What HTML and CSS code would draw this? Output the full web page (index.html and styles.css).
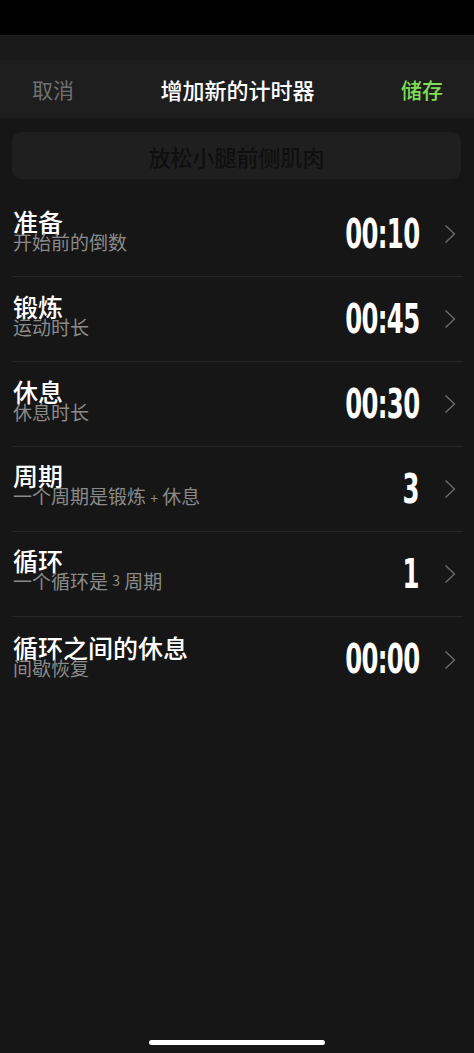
FILE: index.html
```html
<!DOCTYPE html>
<html lang="zh">
<head>
<meta charset="utf-8">
<title>增加新的计时器</title>
<link rel="stylesheet" href="styles.css">
</head>
<body>
<div class="screen">
  <div class="status"></div>
  <div class="sheet-gap"></div>
  <header class="nav">
    <span class="nav-cancel">取消</span>
    <span class="nav-title">增加新的计时器</span>
    <span class="nav-save">储存</span>
  </header>
  <div class="name-wrap">
    <div class="name-box">放松小腿前侧肌肉</div>
  </div>
  <ul class="rows">
    <li class="row">
      <div class="labels"><div class="title">准备</div><div class="sub">开始前的倒数</div></div>
      <div class="value">00:10</div>
      <svg class="chev" viewBox="0 0 12 20" width="12" height="20"><path d="M1.5 1.5 L10.5 10 L1.5 18.5" fill="none" stroke="#6f6f6f" stroke-width="1.3"/></svg>
    </li>
    <li class="row">
      <div class="labels"><div class="title">锻炼</div><div class="sub">运动时长</div></div>
      <div class="value">00:45</div>
      <svg class="chev" viewBox="0 0 12 20" width="12" height="20"><path d="M1.5 1.5 L10.5 10 L1.5 18.5" fill="none" stroke="#6f6f6f" stroke-width="1.3"/></svg>
    </li>
    <li class="row">
      <div class="labels"><div class="title">休息</div><div class="sub">休息时长</div></div>
      <div class="value">00:30</div>
      <svg class="chev" viewBox="0 0 12 20" width="12" height="20"><path d="M1.5 1.5 L10.5 10 L1.5 18.5" fill="none" stroke="#6f6f6f" stroke-width="1.3"/></svg>
    </li>
    <li class="row">
      <div class="labels"><div class="title">周期</div><div class="sub">一个周期是锻炼 <span class="plus">+</span> 休息</div></div>
      <div class="value">3</div>
      <svg class="chev" viewBox="0 0 12 20" width="12" height="20"><path d="M1.5 1.5 L10.5 10 L1.5 18.5" fill="none" stroke="#6f6f6f" stroke-width="1.3"/></svg>
    </li>
    <li class="row">
      <div class="labels"><div class="title">循环</div><div class="sub">一个循环是 <span class="num">3</span> 周期</div></div>
      <div class="value">1</div>
      <svg class="chev" viewBox="0 0 12 20" width="12" height="20"><path d="M1.5 1.5 L10.5 10 L1.5 18.5" fill="none" stroke="#6f6f6f" stroke-width="1.3"/></svg>
    </li>
    <li class="row last">
      <div class="labels"><div class="title">循环之间的休息</div><div class="sub">间歇恢复</div></div>
      <div class="value">00:00</div>
      <svg class="chev" viewBox="0 0 12 20" width="12" height="20"><path d="M1.5 1.5 L10.5 10 L1.5 18.5" fill="none" stroke="#6f6f6f" stroke-width="1.3"/></svg>
    </li>
  </ul>
  <div class="home-indicator"></div>
</div>
</body>
</html>
```
FILE: styles.css
```css
* { box-sizing: border-box; }
html, body {
  margin: 0;
  padding: 0;
  background: #161616;
}
body {
  font-family: "Noto Sans CJK SC", "Noto Sans", sans-serif;
  color: #fff;
}
.screen {
  position: relative;
  width: 474px;
  height: 1053px;
  overflow: hidden;
  background: #161616;
}
.status {
  height: 35px;
  background: #000;
}
.sheet-gap {
  height: 25px;
  background: #1a1a1a;
}
.nav {
  height: 58px;
  background: #1e1e1e;
  display: flex;
  align-items: center;
  justify-content: space-between;
  padding: 0 31px 0 32px;
  font-size: 21px;
  line-height: 1;
}
.nav-cancel { color: #707070; }
.nav-title { color: #fff; font-weight: 500; font-size: 22px; }
.nav-save { color: #7fdc56; font-weight: 500; }
.name-wrap {
  padding: 14px 13px 13px 12px;
}
.name-box {
  height: 47px;
  border-radius: 9px;
  background: #1f1f1f;
  display: flex;
  align-items: center;
  justify-content: center;
  font-size: 22px;
  color: #0f0f0f;
  font-weight: 500;
}
.rows {
  list-style: none;
  margin: 0 11px 0 12px;
  padding: 0;
}
.row {
  height: 85px;
  display: flex;
  align-items: center;
  border-bottom: 1px solid #272727;
  padding: 0 7px 0 1px;
}
.row.last { border-bottom: none; }
.labels {
  flex: 1;
  display: flex;
  flex-direction: column;
  padding-bottom: 7px;
}
.title {
  font-size: 25px;
  line-height: 23px;
  color: #fff;
  font-weight: 500;
}
.sub {
  font-size: 19px;
  line-height: 18px;
  color: #8a8a8a;
}
.sub .plus { font-size: 14px; }
.sub .num { font-size: 14px; position: relative; top: -3px; }
.value {
  font-family: "DejaVu Sans Condensed", "DejaVu Sans", sans-serif;
  font-weight: 700;
  font-size: 41px;
  line-height: 1;
  color: #fff;
  transform: scaleX(0.66);
  transform-origin: right center;
  margin-right: 25px;
  letter-spacing: -1px;
}
.chev { display: block; flex: none; }
.home-indicator {
  position: absolute;
  left: 149px;
  bottom: 8px;
  width: 176px;
  height: 5px;
  border-radius: 3px;
  background: #fff;
}
```
